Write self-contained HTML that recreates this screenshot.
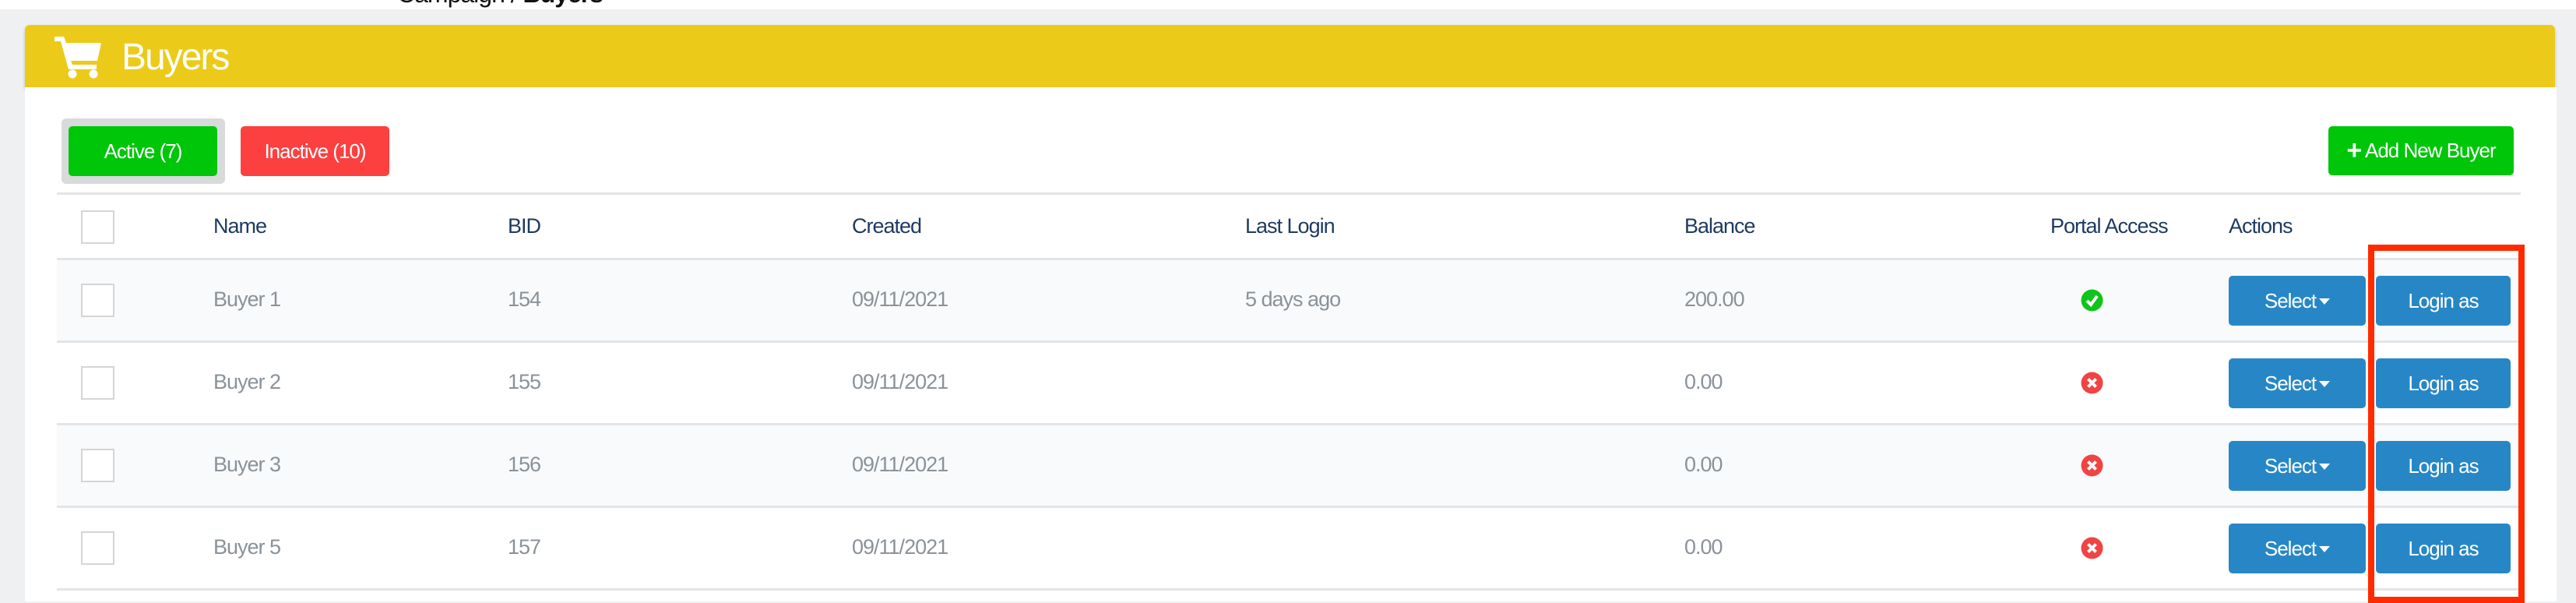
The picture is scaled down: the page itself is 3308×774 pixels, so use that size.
<!DOCTYPE html>
<html><head><meta charset="utf-8"><style>
*{margin:0;padding:0;box-sizing:border-box}
body{width:3308px;height:762px;overflow:hidden;background:#eef0f2;font-family:"Liberation Sans",Arial,sans-serif;position:relative}
.top{position:absolute;left:0;top:0;width:3308px;height:12px;background:#fff}
.crumb{position:absolute;left:510px;top:-26px;font-size:32px;color:#111;white-space:nowrap;letter-spacing:-1px}
.hdr{position:absolute;left:32px;top:32px;width:3249px;height:80px;background:#ecca1a;border-radius:6px 6px 0 0;box-shadow:0 3px 5px rgba(0,0,0,.2)}
.hdr .t{position:absolute;left:124px;top:14px;font-size:48px;color:#fff;letter-spacing:-2px}
.card{position:absolute;left:32px;top:112px;width:3251px;height:660px;background:#fff}
.abs{position:absolute}
.btn{position:absolute;color:#fff;font-size:26px;text-align:center;border-radius:5px;letter-spacing:-1px}
.th{position:absolute;top:275px;font-size:27px;color:#1e3a5f;letter-spacing:-1px}
.td{position:absolute;font-size:27px;color:#8a9299;letter-spacing:-1px}
.cb{position:absolute;left:104px;width:43px;height:43px;border:2px solid #d5d5d5;background:#fff}
.line{position:absolute;left:73px;width:3164px;height:3px;background:#e2e4e6}
.row{position:absolute;left:73px;width:3164px;height:103px}
.car{display:inline-block;width:0;height:0;border-left:7px solid transparent;border-right:7px solid transparent;border-top:8px solid #fff;vertical-align:4px;margin-left:4px}
</style></head><body>
<div class="top"><div class="crumb">Campaign / <b>Buyers</b></div></div>
<div class="hdr">
<svg class="abs" style="left:38px;top:12px" width="62" height="58" viewBox="0 0 62 58"><path d="M0 3 H12 L15 11 H60 L55 34 H21 L23 39 H54 V45 H18 L8 9 H0 Z" fill="#fff"/><circle cx="23" cy="51" r="5.5" fill="#fff"/><circle cx="50" cy="51" r="5.5" fill="#fff"/></svg>
<div class="t">Buyers</div>
</div>
<div class="card"></div>
<div class="abs" style="left:79px;top:152px;width:210px;height:84px;background:#d8dadc;border-radius:6px"></div>
<div class="btn" style="left:88px;top:162px;width:191px;height:64px;line-height:64px;background:#00c60a">Active (7)</div>
<div class="btn" style="left:309px;top:162px;width:191px;height:64px;line-height:64px;background:#fc4040">Inactive (10)</div>
<div class="btn" style="left:2990px;top:162px;width:238px;height:63px;line-height:63px;background:#00c60a"><b style="font-size:34px;vertical-align:-2px">+</b> Add New Buyer</div>
<div class="line" style="top:247px"></div>
<div class="cb" style="top:270px"></div>
<div class="th" style="left:274px">Name</div>
<div class="th" style="left:652px">BID</div>
<div class="th" style="left:1094px">Created</div>
<div class="th" style="left:1599px">Last Login</div>
<div class="th" style="left:2163px">Balance</div>
<div class="th" style="left:2633px">Portal Access</div>
<div class="th" style="left:2862px">Actions</div>

<div class="row" style="top:334px;background:#f9fafb"></div>
<div class="row" style="top:546px;background:#f9fafb"></div>
<div class="line" style="top:331px"></div>
<div class="line" style="top:437px"></div>
<div class="line" style="top:543px"></div>
<div class="line" style="top:649px"></div>
<div class="line" style="top:755px"></div>

<div class="cb" style="top:364px"></div>
<div class="td" style="left:274px;top:369px">Buyer 1</div>
<div class="td" style="left:652px;top:369px">154</div>
<div class="td" style="left:1094px;top:369px">09/11/2021</div>
<div class="td" style="left:1599px;top:369px">5 days ago</div>
<div class="td" style="left:2163px;top:369px">200.00</div>
<svg class="abs" style="left:2672px;top:371px" width="29" height="29" viewBox="0 0 29 29"><circle cx="14.5" cy="14.5" r="14" fill="#0fc41a"/><path d="M8 15 L13 20 L21 9" stroke="#fff" stroke-width="4" fill="none"/></svg>

<div class="cb" style="top:470px"></div>
<div class="td" style="left:274px;top:475px">Buyer 2</div>
<div class="td" style="left:652px;top:475px">155</div>
<div class="td" style="left:1094px;top:475px">09/11/2021</div>
<div class="td" style="left:2163px;top:475px">0.00</div>
<svg class="abs" style="left:2672px;top:477px" width="29" height="29" viewBox="0 0 29 29"><circle cx="14.5" cy="14.5" r="14" fill="#f04444"/><path d="M9.5 9.5 L19.5 19.5 M19.5 9.5 L9.5 19.5" stroke="#fff" stroke-width="4"/></svg>

<div class="cb" style="top:576px"></div>
<div class="td" style="left:274px;top:581px">Buyer 3</div>
<div class="td" style="left:652px;top:581px">156</div>
<div class="td" style="left:1094px;top:581px">09/11/2021</div>
<div class="td" style="left:2163px;top:581px">0.00</div>
<svg class="abs" style="left:2672px;top:583px" width="29" height="29" viewBox="0 0 29 29"><circle cx="14.5" cy="14.5" r="14" fill="#f04444"/><path d="M9.5 9.5 L19.5 19.5 M19.5 9.5 L9.5 19.5" stroke="#fff" stroke-width="4"/></svg>

<div class="cb" style="top:682px"></div>
<div class="td" style="left:274px;top:687px">Buyer 5</div>
<div class="td" style="left:652px;top:687px">157</div>
<div class="td" style="left:1094px;top:687px">09/11/2021</div>
<div class="td" style="left:2163px;top:687px">0.00</div>
<svg class="abs" style="left:2672px;top:689px" width="29" height="29" viewBox="0 0 29 29"><circle cx="14.5" cy="14.5" r="14" fill="#f04444"/><path d="M9.5 9.5 L19.5 19.5 M19.5 9.5 L9.5 19.5" stroke="#fff" stroke-width="4"/></svg>

<div class="btn" style="left:2862px;top:354px;width:176px;height:64px;line-height:64px;background:#2787c6">Select<span class="car"></span></div>
<div class="btn" style="left:3051px;top:354px;width:173px;height:64px;line-height:64px;background:#2787c6">Login as</div>
<div class="btn" style="left:2862px;top:460px;width:176px;height:64px;line-height:64px;background:#2787c6">Select<span class="car"></span></div>
<div class="btn" style="left:3051px;top:460px;width:173px;height:64px;line-height:64px;background:#2787c6">Login as</div>
<div class="btn" style="left:2862px;top:566px;width:176px;height:64px;line-height:64px;background:#2787c6">Select<span class="car"></span></div>
<div class="btn" style="left:3051px;top:566px;width:173px;height:64px;line-height:64px;background:#2787c6">Login as</div>
<div class="btn" style="left:2862px;top:672px;width:176px;height:64px;line-height:64px;background:#2787c6">Select<span class="car"></span></div>
<div class="btn" style="left:3051px;top:672px;width:173px;height:64px;line-height:64px;background:#2787c6">Login as</div>

<div class="abs" style="left:3041px;top:314px;width:201px;height:460px;border:8px solid #ff2a00"></div>
</body></html>
